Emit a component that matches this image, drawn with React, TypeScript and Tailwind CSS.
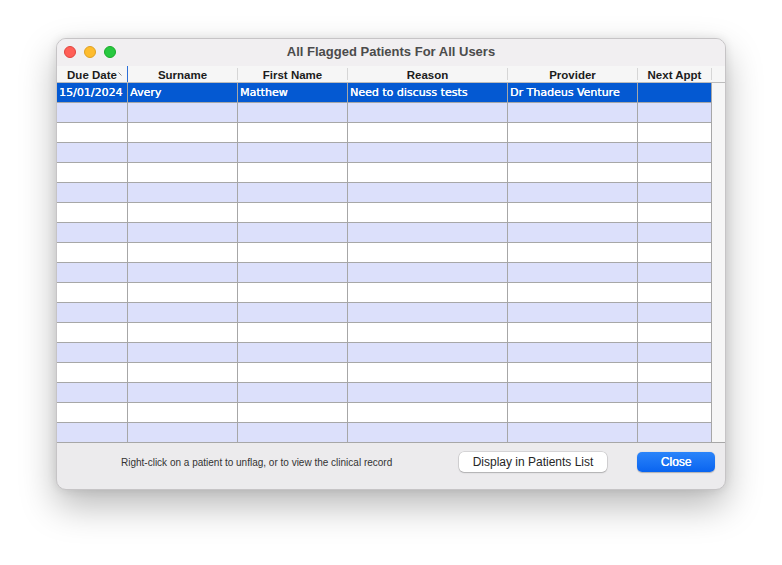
import React from "react";

const columns = [
  { key: "due", label: "Due Date", width: "w-[71px]" },
  { key: "surname", label: "Surname", width: "w-[110px]" },
  { key: "first", label: "First Name", width: "w-[110px]" },
  { key: "reason", label: "Reason", width: "w-[160px]" },
  { key: "provider", label: "Provider", width: "w-[130px]" },
  { key: "next", label: "Next Appt", width: "w-[74px]" },
];

const patients: Record<string, string>[] = [
  {
    due: "15/01/2024",
    surname: "Avery",
    first: "Matthew",
    reason: "Need to discuss tests",
    provider: "Dr Thadeus Venture",
    next: "",
  },
];

const ROW_COUNT = 18;

function TrafficLights() {
  return (
    <div className="flex items-center gap-[8px] pl-[7px]">
      <span className="block h-[12px] w-[12px] rounded-full border-[0.5px] border-[#e0443e] bg-[#ff5f57]" />
      <span className="block h-[12px] w-[12px] rounded-full border-[0.5px] border-[#dea123] bg-[#febc2e]" />
      <span className="block h-[12px] w-[12px] rounded-full border-[0.5px] border-[#1aab29] bg-[#28c840]" />
    </div>
  );
}

function HeaderRow() {
  return (
    <div className="flex h-[17px] border-b border-[#bcbcbc] bg-[#f6f6f6] font-['Liberation_Sans',Arial,sans-serif] text-[11.5px] font-bold text-[#1c1c1c]">
      {columns.map((col, i) => (
        <div key={col.key} className={`${col.width} flex h-full items-center`}>
          <div className="flex flex-1 justify-center pt-[1px] leading-[16px]">
            {i === 0 ? (
              <span className="relative">
                {col.label}
                {/* sort indicator */}
                <svg
                  className="absolute left-full top-[5px] ml-[1px]"
                  width="4"
                  height="4"
                  viewBox="0 0 4 4"
                >
                  <path d="M0.5 0.5 L3.5 3.5" stroke="#777" strokeWidth="0.9" />
                </svg>
              </span>
            ) : (
              col.label
            )}
          </div>
          {i === 0 ? (
            <div className="h-full w-px bg-[#2d6fd8]" />
          ) : (
            <div className="h-[12px] w-px bg-[#d6d6d6]" />
          )}
        </div>
      ))}
      <div className="flex-1" />
    </div>
  );
}

function BodyRow({ index }: { index: number }) {
  const patient = patients[index];
  const selected = index === 0;
  const bg = selected
    ? "bg-[#0459d2] text-white [text-shadow:0.3px_0_0_#fff]"
    : index % 2 === 1
      ? "bg-[#dce0fb]"
      : "bg-white";

  return (
    <div className={`flex h-[20px] border-b border-[#a7a7a7] ${bg}`}>
      {columns.map((col) => (
        <div
          key={col.key}
          className={`${col.width} overflow-hidden whitespace-nowrap border-r border-[#a7a7a7] pl-[2px] leading-[19px]`}
        >
          {patient ? patient[col.key] : ""}
        </div>
      ))}
    </div>
  );
}

export default function App() {
  return (
    <div className="h-[565px] w-[782px] bg-white pl-[56px] pt-[38px]">
      <div className="flex h-[452px] w-[670px] flex-col overflow-hidden rounded-[10px] border border-[#c6c4c6] bg-[#ecebed] shadow-[0_16px_36px_rgba(0,0,0,0.28),0_0_10px_rgba(0,0,0,0.1)]">
        {/* title bar */}
        <div className="grid h-[27px] grid-cols-[1fr_auto_1fr] items-center bg-[#f1eff1] pb-[2px]">
          <TrafficLights />
          <div className="font-['Liberation_Sans',Arial,sans-serif] text-[13px] font-bold text-[#4b4b4b]">
            All Flagged Patients For All Users
          </div>
          <div />
        </div>

        <HeaderRow />

        {/* table body */}
        <div className="flex h-[360px] font-['DejaVu_Sans',Verdana,sans-serif] text-[11px] text-black">
          <div className="w-[655px]">
            {Array.from({ length: ROW_COUNT }, (_, i) => (
              <BodyRow key={i} index={i} />
            ))}
          </div>
          <div className="flex-1 border-b border-[#a7a7a7] bg-[#f6f6f6]" />
        </div>

        {/* footer */}
        <div className="flex flex-1 items-start pt-[9px] font-['Liberation_Sans',Arial,sans-serif]">
          <div className="flex h-[20px] w-full items-center">
            <span className="ml-[64px] text-[10px] text-[#333]">
              Right-click on a patient to unflag, or to view the clinical record
            </span>
            <button className="ml-auto h-[20px] w-[148px] rounded-[5px] bg-white text-[12px] text-[#262626] shadow-[0_0_0_0.5px_rgba(0,0,0,0.18),0_1px_1.5px_rgba(0,0,0,0.18)]">
              Display in Patients List
            </button>
            <button className="ml-[30px] mr-[10px] h-[20px] w-[78px] rounded-[5px] bg-gradient-to-b from-[#2a84fa] to-[#0964f0] text-[12px] text-white shadow-[0_0.5px_1px_rgba(0,0,0,0.25)] [text-shadow:0.4px_0_0_#fff]">
              Close
            </button>
          </div>
        </div>
      </div>
    </div>
  );
}
